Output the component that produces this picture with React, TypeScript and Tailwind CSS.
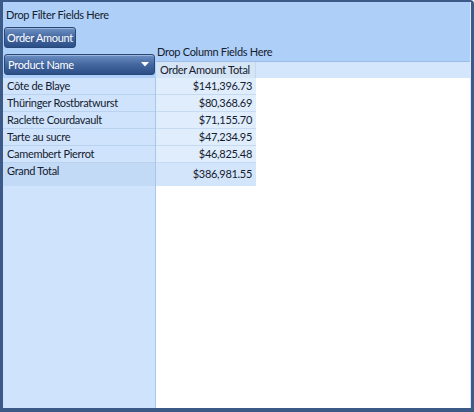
import React from 'react';

const rows = [
  { name: 'Côte de Blaye', total: '$141,396.73' },
  { name: 'Thüringer Rostbratwurst', total: '$80,368.69' },
  { name: 'Raclette Courdavault', total: '$71,155.70' },
  { name: 'Tarte au sucre', total: '$47,234.95' },
  { name: 'Camembert Pierrot', total: '$46,825.48' },
];

const fieldBtn =
  'flex items-center h-[21px] rounded-[3px] border border-[#27487a] bg-gradient-to-b from-[#6d90c4] via-[#44679f] to-[#2c4f88] text-white text-[11px] whitespace-nowrap shadow-[inset_0_1px_0_rgba(255,255,255,0.35)]';

export default function App() {
  return (
    <div
      className="w-[474px] h-[412px] bg-[#3b5a87] pt-[2px] pl-[3px] pr-[3px] pb-[4px] rounded-tr-[4px] text-[11px] tracking-[-0.3px] text-[#15202e] whitespace-nowrap"
      style={{ fontFamily: 'Lato, "Open Sans", sans-serif' }}
    >
      <div className="h-full flex flex-col bg-[#aecff7] border-r border-[#dbe9fa]">
        {/* header area */}
        <div className="flex h-[76px]">
          <div className="w-[153px] flex flex-col pl-[1px] pt-[5px]">
            <div className="h-[15px] leading-[15px] pl-[2px]">Drop Filter Fields Here</div>
            <div className={`${fieldBtn} w-[72px] mt-[5px] justify-center`}>
              <span className="leading-none">Order Amount</span>
            </div>
            <div className={`${fieldBtn} w-[151px] mt-[6px] px-[3px] justify-between`}>
              <span className="leading-none">Product Name</span>
              <svg width="8" height="5" viewBox="0 0 8 5" className="mr-[2px]">
                <path d="M0 0h8L4 4.5z" fill="#ffffff" />
              </svg>
            </div>
          </div>
          <div className="flex-1 flex flex-col justify-end">
            <div className="h-[15px] leading-[15px] pl-[1px] mb-[2px]">Drop Column Fields Here</div>
            <div className="flex h-[17px] border-t border-[#9dbde4] bg-[#d3e6fc]">
              <div className="w-[100px] bg-[#d6e5f6] border-r border-[#c3d8ef] pl-[4px] leading-[16px]">
                Order Amount Total
              </div>
            </div>
          </div>
        </div>

        {/* body */}
        <div className="flex flex-1">
          <div className="w-[153px] flex flex-col bg-[#cfe4fc] border-r border-[#a9c7ea]">
            {rows.map((r) => (
              <div key={r.name} className="h-[17px] leading-[16px] pl-[4px] border-b border-[#b9d3ef]">
                {r.name}
              </div>
            ))}
            <div className="h-[23px] leading-[15px] pl-[4px] bg-[#c2daf6]">Grand Total</div>
          </div>
          <div className="flex-1 bg-white">
            <div className="w-[100px] flex flex-col bg-[#dfedfd]">
              {rows.map((r) => (
                <div key={r.name} className="h-[17px] leading-[16px] pr-[4px] text-right border-b border-[#c6dbf3]">
                  {r.total}
                </div>
              ))}
              <div className="h-[23px] leading-[22px] pr-[4px] text-right bg-[#d3e5fb]">$386,981.55</div>
            </div>
          </div>
        </div>
      </div>
    </div>
  );
}
